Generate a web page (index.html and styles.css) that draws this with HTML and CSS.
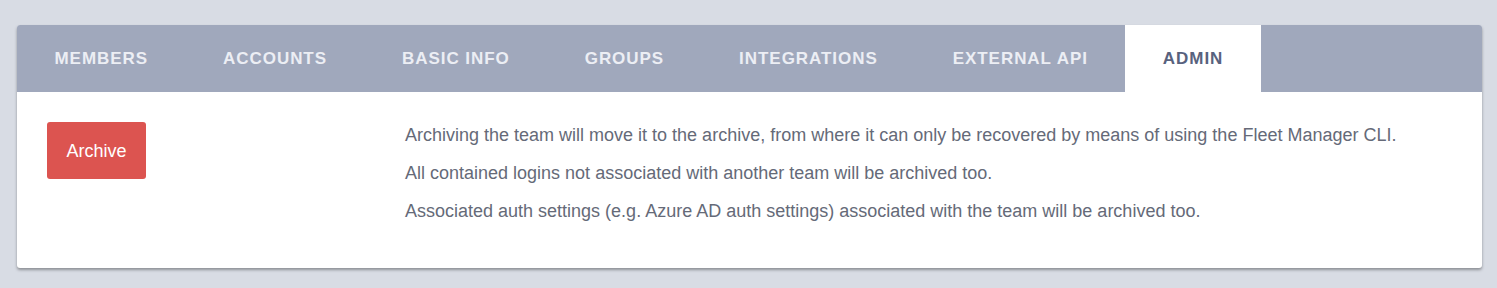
FILE: index.html
```html
<!DOCTYPE html>
<html lang="en">
<head>
    <meta charset="UTF-8">
    <meta name="viewport" content="width=device-width, initial-scale=1.0">
    <title>Team Settings</title>
    <link rel="stylesheet" href="styles.css">
</head>
<body>
    <main class="panel">
        <nav class="tabs">
            <a class="tab" href="#">Members</a>
            <a class="tab" href="#">Accounts</a>
            <a class="tab" href="#">Basic Info</a>
            <a class="tab" href="#">Groups</a>
            <a class="tab" href="#">Integrations</a>
            <a class="tab" href="#">External API</a>
            <a class="tab active" href="#">Admin</a>
        </nav>

        <section class="admin">
            <div class="actions">
                <button class="btn-danger">Archive</button>
            </div>
            <div class="notes">
                <p>Archiving the team will move it to the archive, from where it can only be recovered by means of using the Fleet Manager CLI.</p>
                <p>All contained logins not associated with another team will be archived too.</p>
                <p>Associated auth settings (e.g. Azure AD auth settings) associated with the team will be archived too.</p>
            </div>
        </section>
    </main>
</body>
</html>
```

FILE: styles.css
```css
body {
    font-family: "Liberation Sans", Arial, sans-serif;
    margin: 0;
    padding: 25px 15px 20px 17px;
    background-color: #d8dce4;
}

.panel {
    background-color: #fff;
    border-radius: 3px;
    box-shadow: 0 2px 3px rgba(0, 0, 0, 0.35);
    overflow: hidden;
}

.tabs {
    display: flex;
    background-color: #a0a8bc;
    height: 67px;
}

.tab {
    display: flex;
    align-items: center;
    padding: 0 37.5px;
    font-size: 17px;
    font-weight: bold;
    letter-spacing: 0.95px;
    text-transform: uppercase;
    text-decoration: none;
    color: #eceef4;
}

.tab.active {
    background-color: #fff;
    color: #58627e;
}

.admin {
    display: grid;
    grid-template-columns: 358px 1fr;
    padding: 30px 30px 46px 30px;
}

.btn-danger {
    width: 99px;
    height: 57px;
    padding-top: 2px;
    background-color: #dc5450;
    border: none;
    border-radius: 3px;
    color: #fff;
    font-family: inherit;
    font-size: 18px;
    cursor: pointer;
}

.notes p {
    margin: 0 0 16px;
    font-size: 18px;
    line-height: 22px;
    color: #656a78;
}

.notes p:first-child {
    margin-top: 1.5px;
}

.notes p:last-child {
    margin-bottom: 0;
}
```
